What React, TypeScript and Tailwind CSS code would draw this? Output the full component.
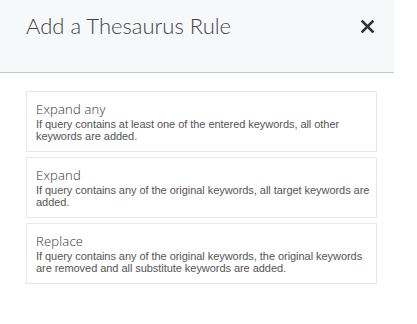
const rules = [
  {
    title: 'Expand any',
    text: 'If query contains at least one of the entered keywords, all other keywords are added.',
  },
  {
    title: 'Expand',
    text: 'If query contains any of the original keywords, all target keywords are added.',
  },
  {
    title: 'Replace',
    text: 'If query contains any of the original keywords, the original keywords are removed and all substitute keywords are added.',
  },
];

export default function App() {
  return (
    <div className="min-h-screen bg-white">
      <div className="w-[394px]">
        <div className="flex h-[73px] items-start justify-between border-b border-[#c3cad5] bg-[#f7f8fa] pl-[26px] pr-[20px] pt-[12px]">
          <h1 className="font-['Lato',sans-serif] text-[22px] font-light leading-[28px] text-[#444]">
            Add a Thesaurus Rule
          </h1>
          <button className="mt-[7px] flex h-[14px] w-[14px] items-center justify-center text-[#333]">
            <svg width="13" height="13" viewBox="0 0 13 13">
              <path d="M1.5 1.5 L11.5 11.5 M11.5 1.5 L1.5 11.5" stroke="currentColor" strokeWidth="2.6" strokeLinecap="square" />
            </svg>
          </button>
        </div>

        <div className="flex flex-col gap-[5px] pl-[26px] pr-[17px] pt-[18px]">
          {rules.map((rule) => (
            <div key={rule.title} className="h-[61px] border border-[#e8e8e8] bg-white pl-[9px] pr-0 pt-[9px]">
              <div className="font-['Open_Sans',sans-serif] text-[13px] font-light leading-[17px] tracking-[0.2px] text-[#333]">
                {rule.title}
              </div>
              <p className="font-['Liberation_Sans',Arial,sans-serif] text-[11px] leading-[12px] tracking-[-0.05px] text-[#555]">
                {rule.text}
              </p>
            </div>
          ))}
        </div>
      </div>
    </div>
  );
}
